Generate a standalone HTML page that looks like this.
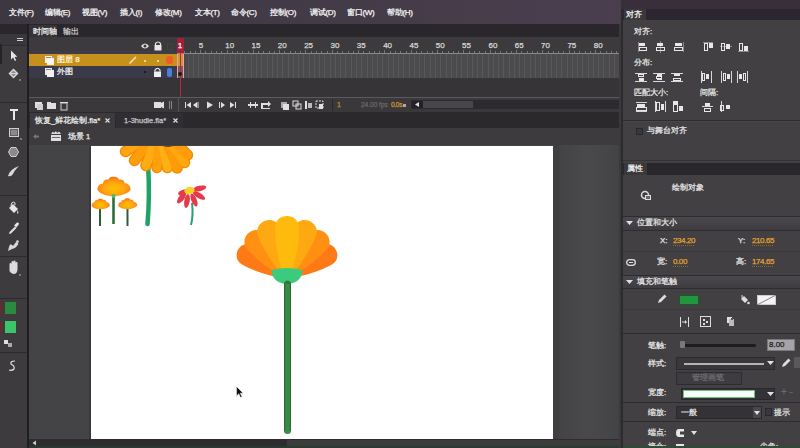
<!DOCTYPE html>
<html><head><meta charset="utf-8">
<style>
*{margin:0;padding:0;box-sizing:border-box}
html,body{width:800px;height:448px;overflow:hidden;background:#3f3d40;font-family:"Liberation Sans",sans-serif;color:#ddd}
.a{position:absolute}
.t{position:absolute;font-size:8px;line-height:10px;white-space:nowrap;color:#e6e6e6;-webkit-text-stroke:0.25px currentColor}
</style></head><body>
<!-- menu bar -->
<div class="a" style="left:0;top:0;width:800px;height:24px;background:linear-gradient(90deg,#3d3741 0%,#453c49 50%,#4e4053 100%)"></div>
<div class="t" style="left:9px;top:7.5px;font-size:8px;letter-spacing:-0.3px;color:#f6f6f6">文件(F)</div>
<div class="t" style="left:45px;top:7.5px;font-size:8px;letter-spacing:-0.3px;color:#f6f6f6">编辑(E)</div>
<div class="t" style="left:82px;top:7.5px;font-size:8px;letter-spacing:-0.3px;color:#f6f6f6">视图(V)</div>
<div class="t" style="left:120px;top:7.5px;font-size:8px;letter-spacing:-0.3px;color:#f6f6f6">插入(I)</div>
<div class="t" style="left:155px;top:7.5px;font-size:8px;letter-spacing:-0.3px;color:#f6f6f6">修改(M)</div>
<div class="t" style="left:195px;top:7.5px;font-size:8px;letter-spacing:-0.3px;color:#f6f6f6">文本(T)</div>
<div class="t" style="left:231px;top:7.5px;font-size:8px;letter-spacing:-0.3px;color:#f6f6f6">命令(C)</div>
<div class="t" style="left:270px;top:7.5px;font-size:8px;letter-spacing:-0.3px;color:#f6f6f6">控制(O)</div>
<div class="t" style="left:310px;top:7.5px;font-size:8px;letter-spacing:-0.3px;color:#f6f6f6">调试(D)</div>
<div class="t" style="left:347px;top:7.5px;font-size:8px;letter-spacing:-0.3px;color:#f6f6f6">窗口(W)</div>
<div class="t" style="left:387px;top:7.5px;font-size:8px;letter-spacing:-0.3px;color:#f6f6f6">帮助(H)</div>

<!-- left toolbar -->
<div class="a" style="left:0;top:24px;width:27px;height:424px;background:#3d3b3e"></div>
<div class="a" style="left:0;top:24px;width:27px;height:10px;background:#29272b"></div>
<div class="a" style="left:0;top:34px;width:27px;height:11px;background:#39373b"></div><div class="a" style="left:0;top:45px;width:27px;height:1px;background:#2e2c30"></div>
<div class="a" style="left:17px;top:38px;width:6px;height:1px;background:#cfcfcf"></div>
<div class="a" style="left:17px;top:40px;width:6px;height:1px;background:#cfcfcf"></div>
<div class="a" style="left:0;top:44px;width:2px;height:20px;background:#252327"></div>
<div class="a" style="left:27px;top:24px;width:2px;height:424px;background:#201e22"></div>
<div class="a" style="left:0;top:102px;width:27px;height:1px;background:#2c2a2e"></div>
<div class="a" style="left:0;top:195px;width:27px;height:1px;background:#2c2a2e"></div>
<div class="a" style="left:0;top:256px;width:27px;height:1px;background:#2c2a2e"></div>
<div class="a" style="left:0;top:298px;width:27px;height:1px;background:#2c2a2e"></div>
<div class="a" style="left:0;top:352px;width:27px;height:1px;background:#2c2a2e"></div>
<svg class="a" style="left:0;top:25px" width="27" height="423" viewBox="0 25 27 423">
<g fill="#e4e4e4">
<path d="M11 50.5 V59.5 L13.2 57.5 L14.8 61 L16.2 60.3 L14.6 57 L17.3 56.8Z"/>
<path d="M13.5 68.5 L18.5 73.5 L13.5 78.5 L8.5 73.5Z" fill="#d8d8d8"/>
<path d="M13.5 70.5 L16.5 73.5 L13.5 76.5 L10.5 73.5Z" fill="#8a888c"/><rect x="9" y="73" width="9" height="1" fill="#d8d8d8"/>
<circle cx="20" cy="80" r="0.7"/>
<path d="M10 109 H18 V111 H15 V120 H13 V111 H10Z" fill="#e8e8e8"/>
<rect x="9.5" y="128.5" width="9" height="8" fill="none" stroke="#cfcfcf" stroke-width="1"/>
<rect x="10.5" y="129.5" width="7" height="6" fill="#8a898c"/>
<circle cx="21" cy="139" r="0.7"/>
<path d="M11 147.5 L16 147.5 L18.5 152 L16 156.5 L11 156.5 L8.5 152Z" fill="#8a898c" stroke="#d0d0d0" stroke-width="1"/>
<path d="M8 176 Q10 169 19 166 Q14 171 13 174 Q11 177 8 176Z" fill="#d8d8d8"/>
<path d="M9 208 L13 204 L18 209 L14 213 Z" fill="#e6e6e6"/><path d="M11 206 Q11 202 13.5 202 Q15.5 202 15 205" stroke="#e6e6e6" stroke-width="1" fill="none"/><path d="M17.5 210 Q19 212 18 214 Q16.5 213 17.5 210Z" fill="#e6e6e6"/>
<path d="M9 234 L9.5 232 L15 226.5 L16.5 228 L11 233.5Z" fill="#e0e0e0"/><path d="M14 225.5 L17 222.5 Q19 222 19 224 L16.5 227.5Z" fill="#e6e6e6"/>
<path d="M8 251 L9 247 Q10 243 12 245 Q13 247 14.5 244 Q16 241 18 242.5 Q19 244 17 246 Q15 249 12 249 Z" fill="#d8d8d8"/><circle cx="17.5" cy="241.5" r="1.3" fill="#d8d8d8"/>
<path d="M9.5 268 L9.5 264 Q9.5 263 10.5 263 Q11.5 263 11.5 264 L11.5 262 Q11.5 261 12.5 261 Q13.5 261 13.5 262 L13.5 261.5 Q13.5 260.5 14.5 260.5 Q15.5 260.5 15.5 261.5 L15.5 263 Q15.5 262 16.5 262 Q17.5 262 17.5 263 L17.5 269 Q17.5 274 13.5 274 Q11 274 9.5 271Z" fill="#dcdcdc"/>
<circle cx="20" cy="275" r="0.7"/>
</g>
<rect x="0" y="302" width="2" height="12" fill="#6a2a2a"/>
<rect x="5" y="302" width="11" height="12" fill="#2a8a3e"/>
<rect x="0" y="321" width="2" height="12" fill="#6a2a2a"/>
<rect x="5" y="321" width="11" height="12" fill="#3cc46a"/>
<g fill="#e0e0e0"><rect x="4" y="340" width="4" height="4"/><rect x="8" y="343" width="4" height="4" fill="#aaa"/></g>
<path d="M15 361 Q10 361 11 364 Q15 366 14 369 Q12 371 9 370" stroke="#e0e0e0" stroke-width="1.2" fill="none"/>
</svg>
<!-- timeline panel -->
<div class="a" style="left:29px;top:24px;width:593px;height:13px;background:#29272b"></div>
<div class="a" style="left:29px;top:25px;width:28px;height:12px;background:#353337"></div>
<div class="t" style="left:33px;top:27px;font-size:7.5px;color:#f4f4f4">时间轴</div>
<div class="t" style="left:63px;top:27px;font-size:7.5px;color:#c8c8c8">输出</div>
<div class="a" style="left:29px;top:37px;width:593px;height:16px;background:#3c3a3d"></div>
<div class="a" style="left:29px;top:51px;width:148px;height:3px;background:#3e3b4a"></div>
<div class="a" style="left:29px;top:54px;width:148px;height:12px;background:#c6901c"></div>
<div class="a" style="left:29px;top:66px;width:148px;height:12px;background:#3b3a48"></div>
<div class="a" style="left:29px;top:78px;width:593px;height:20px;background:#363437"></div>
<div class="a" style="left:177px;top:54px;width:445px;height:24px;background:#4b4a4d"></div>
<div class="a" style="left:177px;top:53px;width:445px;height:1px;background:#8a898c"></div>
<div class="a" style="left:179.13px;top:51px;width:1px;height:2px;background:#77757a"></div>
<div class="a" style="left:182.26px;top:54px;width:1px;height:24px;background:#58575a"></div>
<div class="a" style="left:184.40px;top:51px;width:1px;height:2px;background:#77757a"></div>
<div class="a" style="left:187.53px;top:54px;width:1px;height:24px;background:#58575a"></div>
<div class="a" style="left:189.66px;top:51px;width:1px;height:2px;background:#77757a"></div>
<div class="a" style="left:192.79px;top:54px;width:1px;height:24px;background:#58575a"></div>
<div class="a" style="left:194.93px;top:51px;width:1px;height:2px;background:#77757a"></div>
<div class="a" style="left:198.06px;top:54px;width:1px;height:24px;background:#58575a"></div>
<div class="a" style="left:200.19px;top:50px;width:1px;height:3px;background:#77757a"></div>
<div class="t" style="left:198.86px;top:41px;font-size:8px;color:#dadada">5</div>
<div class="a" style="left:203.32px;top:54px;width:1px;height:24px;background:#58575a"></div>
<div class="a" style="left:205.46px;top:51px;width:1px;height:2px;background:#77757a"></div>
<div class="a" style="left:208.59px;top:54px;width:1px;height:24px;background:#58575a"></div>
<div class="a" style="left:210.72px;top:51px;width:1px;height:2px;background:#77757a"></div>
<div class="a" style="left:213.85px;top:54px;width:1px;height:24px;background:#58575a"></div>
<div class="a" style="left:215.99px;top:51px;width:1px;height:2px;background:#77757a"></div>
<div class="a" style="left:219.12px;top:54px;width:1px;height:24px;background:#58575a"></div>
<div class="a" style="left:221.25px;top:51px;width:1px;height:2px;background:#77757a"></div>
<div class="a" style="left:224.38px;top:54px;width:1px;height:24px;background:#58575a"></div>
<div class="a" style="left:226.52px;top:50px;width:1px;height:3px;background:#77757a"></div>
<div class="t" style="left:225.19px;top:41px;font-size:8px;color:#dadada">10</div>
<div class="a" style="left:229.65px;top:54px;width:1px;height:24px;background:#58575a"></div>
<div class="a" style="left:231.78px;top:51px;width:1px;height:2px;background:#77757a"></div>
<div class="a" style="left:234.91px;top:54px;width:1px;height:24px;background:#58575a"></div>
<div class="a" style="left:237.05px;top:51px;width:1px;height:2px;background:#77757a"></div>
<div class="a" style="left:240.18px;top:54px;width:1px;height:24px;background:#58575a"></div>
<div class="a" style="left:242.31px;top:51px;width:1px;height:2px;background:#77757a"></div>
<div class="a" style="left:245.44px;top:54px;width:1px;height:24px;background:#58575a"></div>
<div class="a" style="left:247.58px;top:51px;width:1px;height:2px;background:#77757a"></div>
<div class="a" style="left:250.71px;top:54px;width:1px;height:24px;background:#58575a"></div>
<div class="a" style="left:252.84px;top:50px;width:1px;height:3px;background:#77757a"></div>
<div class="t" style="left:251.51px;top:41px;font-size:8px;color:#dadada">15</div>
<div class="a" style="left:255.97px;top:54px;width:1px;height:24px;background:#58575a"></div>
<div class="a" style="left:258.11px;top:51px;width:1px;height:2px;background:#77757a"></div>
<div class="a" style="left:261.24px;top:54px;width:1px;height:24px;background:#58575a"></div>
<div class="a" style="left:263.37px;top:51px;width:1px;height:2px;background:#77757a"></div>
<div class="a" style="left:266.50px;top:54px;width:1px;height:24px;background:#58575a"></div>
<div class="a" style="left:268.64px;top:51px;width:1px;height:2px;background:#77757a"></div>
<div class="a" style="left:271.77px;top:54px;width:1px;height:24px;background:#58575a"></div>
<div class="a" style="left:273.90px;top:51px;width:1px;height:2px;background:#77757a"></div>
<div class="a" style="left:277.03px;top:54px;width:1px;height:24px;background:#58575a"></div>
<div class="a" style="left:279.17px;top:50px;width:1px;height:3px;background:#77757a"></div>
<div class="t" style="left:277.83px;top:41px;font-size:8px;color:#dadada">20</div>
<div class="a" style="left:282.30px;top:54px;width:1px;height:24px;background:#58575a"></div>
<div class="a" style="left:284.43px;top:51px;width:1px;height:2px;background:#77757a"></div>
<div class="a" style="left:287.56px;top:54px;width:1px;height:24px;background:#58575a"></div>
<div class="a" style="left:289.70px;top:51px;width:1px;height:2px;background:#77757a"></div>
<div class="a" style="left:292.83px;top:54px;width:1px;height:24px;background:#58575a"></div>
<div class="a" style="left:294.96px;top:51px;width:1px;height:2px;background:#77757a"></div>
<div class="a" style="left:298.09px;top:54px;width:1px;height:24px;background:#58575a"></div>
<div class="a" style="left:300.23px;top:51px;width:1px;height:2px;background:#77757a"></div>
<div class="a" style="left:303.36px;top:54px;width:1px;height:24px;background:#58575a"></div>
<div class="a" style="left:305.49px;top:50px;width:1px;height:3px;background:#77757a"></div>
<div class="t" style="left:304.16px;top:41px;font-size:8px;color:#dadada">25</div>
<div class="a" style="left:308.62px;top:54px;width:1px;height:24px;background:#58575a"></div>
<div class="a" style="left:310.76px;top:51px;width:1px;height:2px;background:#77757a"></div>
<div class="a" style="left:313.89px;top:54px;width:1px;height:24px;background:#58575a"></div>
<div class="a" style="left:316.02px;top:51px;width:1px;height:2px;background:#77757a"></div>
<div class="a" style="left:319.15px;top:54px;width:1px;height:24px;background:#58575a"></div>
<div class="a" style="left:321.29px;top:51px;width:1px;height:2px;background:#77757a"></div>
<div class="a" style="left:324.42px;top:54px;width:1px;height:24px;background:#58575a"></div>
<div class="a" style="left:326.55px;top:51px;width:1px;height:2px;background:#77757a"></div>
<div class="a" style="left:329.68px;top:54px;width:1px;height:24px;background:#58575a"></div>
<div class="a" style="left:331.82px;top:50px;width:1px;height:3px;background:#77757a"></div>
<div class="t" style="left:330.49px;top:41px;font-size:8px;color:#dadada">30</div>
<div class="a" style="left:334.95px;top:54px;width:1px;height:24px;background:#58575a"></div>
<div class="a" style="left:337.08px;top:51px;width:1px;height:2px;background:#77757a"></div>
<div class="a" style="left:340.21px;top:54px;width:1px;height:24px;background:#58575a"></div>
<div class="a" style="left:342.35px;top:51px;width:1px;height:2px;background:#77757a"></div>
<div class="a" style="left:345.48px;top:54px;width:1px;height:24px;background:#58575a"></div>
<div class="a" style="left:347.61px;top:51px;width:1px;height:2px;background:#77757a"></div>
<div class="a" style="left:350.75px;top:54px;width:1px;height:24px;background:#58575a"></div>
<div class="a" style="left:352.88px;top:51px;width:1px;height:2px;background:#77757a"></div>
<div class="a" style="left:356.01px;top:54px;width:1px;height:24px;background:#58575a"></div>
<div class="a" style="left:358.14px;top:50px;width:1px;height:3px;background:#77757a"></div>
<div class="t" style="left:356.81px;top:41px;font-size:8px;color:#dadada">35</div>
<div class="a" style="left:361.27px;top:54px;width:1px;height:24px;background:#58575a"></div>
<div class="a" style="left:363.41px;top:51px;width:1px;height:2px;background:#77757a"></div>
<div class="a" style="left:366.54px;top:54px;width:1px;height:24px;background:#58575a"></div>
<div class="a" style="left:368.67px;top:51px;width:1px;height:2px;background:#77757a"></div>
<div class="a" style="left:371.80px;top:54px;width:1px;height:24px;background:#58575a"></div>
<div class="a" style="left:373.94px;top:51px;width:1px;height:2px;background:#77757a"></div>
<div class="a" style="left:377.07px;top:54px;width:1px;height:24px;background:#58575a"></div>
<div class="a" style="left:379.20px;top:51px;width:1px;height:2px;background:#77757a"></div>
<div class="a" style="left:382.33px;top:54px;width:1px;height:24px;background:#58575a"></div>
<div class="a" style="left:384.47px;top:50px;width:1px;height:3px;background:#77757a"></div>
<div class="t" style="left:383.13px;top:41px;font-size:8px;color:#dadada">40</div>
<div class="a" style="left:387.60px;top:54px;width:1px;height:24px;background:#58575a"></div>
<div class="a" style="left:389.73px;top:51px;width:1px;height:2px;background:#77757a"></div>
<div class="a" style="left:392.87px;top:54px;width:1px;height:24px;background:#58575a"></div>
<div class="a" style="left:395.00px;top:51px;width:1px;height:2px;background:#77757a"></div>
<div class="a" style="left:398.13px;top:54px;width:1px;height:24px;background:#58575a"></div>
<div class="a" style="left:400.26px;top:51px;width:1px;height:2px;background:#77757a"></div>
<div class="a" style="left:403.39px;top:54px;width:1px;height:24px;background:#58575a"></div>
<div class="a" style="left:405.53px;top:51px;width:1px;height:2px;background:#77757a"></div>
<div class="a" style="left:408.66px;top:54px;width:1px;height:24px;background:#58575a"></div>
<div class="a" style="left:410.79px;top:50px;width:1px;height:3px;background:#77757a"></div>
<div class="t" style="left:409.46px;top:41px;font-size:8px;color:#dadada">45</div>
<div class="a" style="left:413.92px;top:54px;width:1px;height:24px;background:#58575a"></div>
<div class="a" style="left:416.06px;top:51px;width:1px;height:2px;background:#77757a"></div>
<div class="a" style="left:419.19px;top:54px;width:1px;height:24px;background:#58575a"></div>
<div class="a" style="left:421.32px;top:51px;width:1px;height:2px;background:#77757a"></div>
<div class="a" style="left:424.45px;top:54px;width:1px;height:24px;background:#58575a"></div>
<div class="a" style="left:426.59px;top:51px;width:1px;height:2px;background:#77757a"></div>
<div class="a" style="left:429.72px;top:54px;width:1px;height:24px;background:#58575a"></div>
<div class="a" style="left:431.85px;top:51px;width:1px;height:2px;background:#77757a"></div>
<div class="a" style="left:434.98px;top:54px;width:1px;height:24px;background:#58575a"></div>
<div class="a" style="left:437.12px;top:50px;width:1px;height:3px;background:#77757a"></div>
<div class="t" style="left:435.78px;top:41px;font-size:8px;color:#dadada">50</div>
<div class="a" style="left:440.25px;top:54px;width:1px;height:24px;background:#58575a"></div>
<div class="a" style="left:442.38px;top:51px;width:1px;height:2px;background:#77757a"></div>
<div class="a" style="left:445.51px;top:54px;width:1px;height:24px;background:#58575a"></div>
<div class="a" style="left:447.65px;top:51px;width:1px;height:2px;background:#77757a"></div>
<div class="a" style="left:450.78px;top:54px;width:1px;height:24px;background:#58575a"></div>
<div class="a" style="left:452.91px;top:51px;width:1px;height:2px;background:#77757a"></div>
<div class="a" style="left:456.04px;top:54px;width:1px;height:24px;background:#58575a"></div>
<div class="a" style="left:458.18px;top:51px;width:1px;height:2px;background:#77757a"></div>
<div class="a" style="left:461.31px;top:54px;width:1px;height:24px;background:#58575a"></div>
<div class="a" style="left:463.44px;top:50px;width:1px;height:3px;background:#77757a"></div>
<div class="t" style="left:462.11px;top:41px;font-size:8px;color:#dadada">55</div>
<div class="a" style="left:466.57px;top:54px;width:1px;height:24px;background:#58575a"></div>
<div class="a" style="left:468.71px;top:51px;width:1px;height:2px;background:#77757a"></div>
<div class="a" style="left:471.84px;top:54px;width:1px;height:24px;background:#58575a"></div>
<div class="a" style="left:473.97px;top:51px;width:1px;height:2px;background:#77757a"></div>
<div class="a" style="left:477.10px;top:54px;width:1px;height:24px;background:#58575a"></div>
<div class="a" style="left:479.24px;top:51px;width:1px;height:2px;background:#77757a"></div>
<div class="a" style="left:482.37px;top:54px;width:1px;height:24px;background:#58575a"></div>
<div class="a" style="left:484.50px;top:51px;width:1px;height:2px;background:#77757a"></div>
<div class="a" style="left:487.63px;top:54px;width:1px;height:24px;background:#58575a"></div>
<div class="a" style="left:489.77px;top:50px;width:1px;height:3px;background:#77757a"></div>
<div class="t" style="left:488.44px;top:41px;font-size:8px;color:#dadada">60</div>
<div class="a" style="left:492.90px;top:54px;width:1px;height:24px;background:#58575a"></div>
<div class="a" style="left:495.03px;top:51px;width:1px;height:2px;background:#77757a"></div>
<div class="a" style="left:498.16px;top:54px;width:1px;height:24px;background:#58575a"></div>
<div class="a" style="left:500.30px;top:51px;width:1px;height:2px;background:#77757a"></div>
<div class="a" style="left:503.43px;top:54px;width:1px;height:24px;background:#58575a"></div>
<div class="a" style="left:505.56px;top:51px;width:1px;height:2px;background:#77757a"></div>
<div class="a" style="left:508.69px;top:54px;width:1px;height:24px;background:#58575a"></div>
<div class="a" style="left:510.83px;top:51px;width:1px;height:2px;background:#77757a"></div>
<div class="a" style="left:513.96px;top:54px;width:1px;height:24px;background:#58575a"></div>
<div class="a" style="left:516.09px;top:50px;width:1px;height:3px;background:#77757a"></div>
<div class="t" style="left:514.76px;top:41px;font-size:8px;color:#dadada">65</div>
<div class="a" style="left:519.23px;top:54px;width:1px;height:24px;background:#58575a"></div>
<div class="a" style="left:521.36px;top:51px;width:1px;height:2px;background:#77757a"></div>
<div class="a" style="left:524.49px;top:54px;width:1px;height:24px;background:#58575a"></div>
<div class="a" style="left:526.62px;top:51px;width:1px;height:2px;background:#77757a"></div>
<div class="a" style="left:529.75px;top:54px;width:1px;height:24px;background:#58575a"></div>
<div class="a" style="left:531.89px;top:51px;width:1px;height:2px;background:#77757a"></div>
<div class="a" style="left:535.02px;top:54px;width:1px;height:24px;background:#58575a"></div>
<div class="a" style="left:537.15px;top:51px;width:1px;height:2px;background:#77757a"></div>
<div class="a" style="left:540.28px;top:54px;width:1px;height:24px;background:#58575a"></div>
<div class="a" style="left:542.42px;top:50px;width:1px;height:3px;background:#77757a"></div>
<div class="t" style="left:541.08px;top:41px;font-size:8px;color:#dadada">70</div>
<div class="a" style="left:545.55px;top:54px;width:1px;height:24px;background:#58575a"></div>
<div class="a" style="left:547.68px;top:51px;width:1px;height:2px;background:#77757a"></div>
<div class="a" style="left:550.81px;top:54px;width:1px;height:24px;background:#58575a"></div>
<div class="a" style="left:552.95px;top:51px;width:1px;height:2px;background:#77757a"></div>
<div class="a" style="left:556.08px;top:54px;width:1px;height:24px;background:#58575a"></div>
<div class="a" style="left:558.21px;top:51px;width:1px;height:2px;background:#77757a"></div>
<div class="a" style="left:561.34px;top:54px;width:1px;height:24px;background:#58575a"></div>
<div class="a" style="left:563.48px;top:51px;width:1px;height:2px;background:#77757a"></div>
<div class="a" style="left:566.61px;top:54px;width:1px;height:24px;background:#58575a"></div>
<div class="a" style="left:568.74px;top:50px;width:1px;height:3px;background:#77757a"></div>
<div class="t" style="left:567.41px;top:41px;font-size:8px;color:#dadada">75</div>
<div class="a" style="left:571.87px;top:54px;width:1px;height:24px;background:#58575a"></div>
<div class="a" style="left:574.01px;top:51px;width:1px;height:2px;background:#77757a"></div>
<div class="a" style="left:577.14px;top:54px;width:1px;height:24px;background:#58575a"></div>
<div class="a" style="left:579.27px;top:51px;width:1px;height:2px;background:#77757a"></div>
<div class="a" style="left:582.40px;top:54px;width:1px;height:24px;background:#58575a"></div>
<div class="a" style="left:584.54px;top:51px;width:1px;height:2px;background:#77757a"></div>
<div class="a" style="left:587.67px;top:54px;width:1px;height:24px;background:#58575a"></div>
<div class="a" style="left:589.80px;top:51px;width:1px;height:2px;background:#77757a"></div>
<div class="a" style="left:592.93px;top:54px;width:1px;height:24px;background:#58575a"></div>
<div class="a" style="left:595.07px;top:50px;width:1px;height:3px;background:#77757a"></div>
<div class="t" style="left:593.73px;top:41px;font-size:8px;color:#dadada">80</div>
<div class="a" style="left:598.20px;top:54px;width:1px;height:24px;background:#58575a"></div>
<div class="a" style="left:600.33px;top:51px;width:1px;height:2px;background:#77757a"></div>
<div class="a" style="left:603.47px;top:54px;width:1px;height:24px;background:#58575a"></div>
<div class="a" style="left:605.60px;top:51px;width:1px;height:2px;background:#77757a"></div>
<div class="a" style="left:608.73px;top:54px;width:1px;height:24px;background:#58575a"></div>
<div class="a" style="left:610.86px;top:51px;width:1px;height:2px;background:#77757a"></div>
<div class="a" style="left:614.00px;top:54px;width:1px;height:24px;background:#58575a"></div>
<div class="a" style="left:616.13px;top:51px;width:1px;height:2px;background:#77757a"></div>
<div class="a" style="left:619.26px;top:54px;width:1px;height:24px;background:#58575a"></div>
<div class="a" style="left:176.5px;top:38px;width:7px;height:15px;background:#a51f3a"></div>
<div class="t" style="left:176.5px;top:41px;width:7px;text-align:center;font-size:8px;color:#fff">1</div>
<div class="a" style="left:177px;top:54px;width:7px;height:12px;background:#d29634"></div>
<div class="a" style="left:177px;top:66px;width:7px;height:12px;background:#7a5a58"></div>
<div class="a" style="left:177px;top:54px;width:1px;height:24px;background:#f0a0a0"></div>
<div class="a" style="left:183px;top:54px;width:1px;height:24px;background:#f0a0a0"></div>
<div class="a" style="left:179.5px;top:53px;width:1px;height:45px;background:#b02a48"></div>
<div class="a" style="left:178px;top:71.5px;width:4px;height:4px;border-radius:50%;background:#1a1a1a"></div>
<!-- header icons -->
<svg class="a" style="left:140px;top:41px" width="35" height="10" viewBox="0 0 35 10">
<path d="M1 5 Q5 0 9 5 Q5 10 1 5Z" fill="#e8e8e8"/><circle cx="5" cy="5" r="1.6" fill="#3c3a3d"/>
<path d="M15.5 4 V2.5 Q18 -0.5 20.5 2.5 V4" stroke="#e8e8e8" stroke-width="1.2" fill="none"/><rect x="14.5" y="4" width="7" height="5.5" fill="#e8e8e8"/>
<rect x="27.5" y="3" width="5" height="6" fill="none" stroke="#3a4a3a" stroke-width="1"/>
</svg>
<!-- row1 -->
<svg class="a" style="left:45px;top:56px" width="9" height="9" viewBox="0 0 9 9"><rect x="0" y="0" width="7" height="7" fill="#f4f0e8"/><rect x="2" y="2" width="7" height="7" fill="#f8f6f0"/><rect x="1" y="1" width="5" height="1" fill="#888"/></svg>
<div class="t" style="left:57px;top:55px;font-size:8px;color:#fff6d8">图层 8</div>
<svg class="a" style="left:128px;top:56px" width="9" height="8" viewBox="0 0 9 8"><path d="M1 7 L7.5 0.5 L8.5 1.5 L2 8Z" fill="#f8e8c0"/></svg>
<div class="a" style="left:144px;top:59.5px;width:2px;height:2px;border-radius:50%;background:#ffeeaa"></div>
<div class="a" style="left:157px;top:59.5px;width:2px;height:2px;border-radius:50%;background:#ffeeaa"></div>
<div class="a" style="left:166px;top:56px;width:7px;height:8px;border-radius:3px;background:#f05a26"></div>
<!-- row2 -->
<svg class="a" style="left:45px;top:68px" width="9" height="9" viewBox="0 0 9 9"><rect x="0" y="0" width="7" height="7" fill="#e8e8e8"/><rect x="2" y="2" width="7" height="7" fill="#f0f0f0"/><rect x="1" y="1" width="5" height="1" fill="#888"/></svg>
<div class="t" style="left:57px;top:67px;font-size:8px;color:#f0f0f0">外图</div>
<div class="a" style="left:144px;top:71px;width:2px;height:2px;border-radius:50%;background:#111"></div>
<svg class="a" style="left:153px;top:67px" width="9" height="10" viewBox="0 0 9 10"><path d="M2 4.5 V3 Q4.5 -0.5 7 3 V4.5" stroke="#f0f0f0" stroke-width="1.2" fill="none"/><rect x="1" y="4.5" width="7" height="5.5" fill="#f0f0f0"/></svg>
<div class="a" style="left:167px;top:68px;width:5px;height:9px;border-radius:2px;background:#4a7ee0"></div>
<!-- bottom toolbar -->
<div class="a" style="left:29px;top:97px;width:593px;height:1px;background:#5c5a5e"></div>
<div class="a" style="left:29px;top:98px;width:593px;height:14px;background:#3a383b"></div>
<svg class="a" style="left:34px;top:100px" width="300" height="11" viewBox="34 100 300 11">
<g fill="#e0e0e0">
<rect x="35" y="102" width="7" height="6"/><rect x="37" y="104" width="6" height="6" fill="#cfcfcf"/>
<rect x="47" y="103" width="9" height="6"/><rect x="47" y="102" width="4" height="2"/>
<rect x="61" y="103" width="6" height="7" fill="none" stroke="#d0d0d0" stroke-width="1"/><rect x="60" y="102" width="8" height="1"/>
<rect x="154" y="102" width="7" height="6"/><path d="M161 103 L164 101.5 V108.5 L161 107Z"/>
<rect x="169" y="101" width="1" height="8" fill="#888"/><rect x="171" y="101" width="1" height="8" fill="#888"/>
<rect x="185" y="102" width="1" height="6"/><path d="M191 102 V108 L186.5 105Z"/>
<path d="M197 102 V108 L193 105Z"/><rect x="197.5" y="102" width="1" height="6"/>
<path d="M207 101.5 V108.5 L213 105Z"/>
<rect x="219" y="102" width="1" height="6"/><path d="M221 102 V108 L225 105Z"/>
<path d="M230 102 V108 L234.5 105Z"/><rect x="235" y="102" width="1" height="6"/>
<rect x="248" y="104" width="10" height="2"/><rect x="250" y="102" width="1" height="6"/><rect x="255" y="102" width="1" height="6"/>
<path d="M261 103 H268 V101 L271 104 L268 107 V105 H263 V108 H270 V109 H261Z"/>
<rect x="281" y="102" width="6" height="6" fill="#aaa"/><rect x="283" y="104" width="6" height="6"/>
<rect x="293" y="101" width="5" height="5" fill="none" stroke="#ddd" stroke-width="1"/><rect x="296" y="104" width="5" height="5" fill="none" stroke="#ddd" stroke-width="1"/>
<rect x="305" y="101" width="2" height="8"/><rect x="308" y="103" width="4" height="5" fill="#bbb"/>
<rect x="316" y="101" width="7" height="7" fill="none" stroke="#ddd" stroke-width="1" stroke-dasharray="2 1"/><rect x="319" y="104" width="4" height="5"/>
</g>
</svg>
<div class="a" style="left:178px;top:98px;width:1px;height:14px;background:#55535a"></div>
<div class="a" style="left:332px;top:99px;width:1px;height:12px;background:#2a282c"></div>
<div class="t" style="left:337px;top:100px;font-size:7px;color:#b88a30">1</div>
<div class="t" style="left:361px;top:100px;font-size:6.5px;color:#6a686c">24.00 fps</div>
<div class="t" style="left:391px;top:100px;font-size:6.5px;letter-spacing:-0.3px;color:#d09a30">0.0s</div>
<div class="a" style="left:403px;top:104px;width:3px;height:3px;background:#aaa"></div>
<div class="a" style="left:411px;top:100px;width:209px;height:9px;background:#2c2a2e"></div>
<div class="a" style="left:412px;top:101px;width:11px;height:7px;background:#232125"></div>
<div class="a" style="left:423px;top:101px;width:50px;height:7px;background:#48464a"></div>
<svg class="a" style="left:414px;top:102px" width="6" height="5" viewBox="0 0 6 5"><path d="M5 0 V5 L1 2.5Z" fill="#e0e0e0"/></svg>
<!-- doc tabs -->
<div class="a" style="left:29px;top:112px;width:591px;height:16px;background:#2b292c"></div>
<div class="a" style="left:30px;top:113px;width:85px;height:15px;background:#3c3a3d"></div><div class="a" style="left:116px;top:113px;width:67px;height:15px;background:#302e32"></div>
<div class="t" style="left:35px;top:116px;font-size:7.5px;color:#ececec">恢复_鲜花绘制.fla*</div>
<svg class="a" style="left:105px;top:118px" width="5" height="5"><path d="M0.5 0.5 L4.5 4.5 M4.5 0.5 L0.5 4.5" stroke="#e0e0e0" stroke-width="1.1"/></svg>
<div class="t" style="left:124px;top:116px;font-size:7.5px;color:#c8c8c8">1-3hudie.fla*</div>
<svg class="a" style="left:173px;top:118px" width="5" height="5"><path d="M0.5 0.5 L4.5 4.5 M4.5 0.5 L0.5 4.5" stroke="#e0e0e0" stroke-width="1.1"/></svg>
<!-- scene bar -->
<div class="a" style="left:29px;top:128px;width:591px;height:17px;background:#3d3b3e"></div>
<svg class="a" style="left:32px;top:133px" width="8" height="7"><path d="M1 3.5 L4 1 V2.5 H7 V4.5 H4 V6Z" fill="#77757a"/></svg>
<svg class="a" style="left:50px;top:131px" width="12" height="10" viewBox="0 0 12 10"><rect x="1" y="4" width="10" height="6" fill="#e0e0e0"/><path d="M1 3 L3 0.5 L4 2 L6 0 L7 2 L9 0.5 L11 3Z" fill="#e0e0e0"/><rect x="2" y="6" width="8" height="1" fill="#666"/></svg>
<div class="t" style="left:68px;top:132px;font-size:7.5px;color:#e8e8e8">场景 1</div>
<!-- stage area -->
<div class="a" style="left:29px;top:145px;width:591px;height:294px;background:#444346"></div>
<div class="a" style="left:89px;top:146px;width:2px;height:293px;background:#38373a"></div><div class="a" style="left:553px;top:145px;width:66px;height:294px;background:linear-gradient(90deg,#3f3e41 0px,#3f3e41 6px,#444346 7px,#49484b 35px,#464548 55px,#434245 66px)"></div><div class="a" style="left:91px;top:146px;width:462px;height:293px;background:#ffffff"></div>
<svg class="a" style="left:91px;top:146px" width="462" height="293" viewBox="91 146 462 293">
<!-- drooping flower -->
<g>
<path d="M148 164 Q150 195 147.5 224" stroke="#1fa268" stroke-width="4.5" fill="none" stroke-linecap="round"/>
<line x1="160" y1="128" x2="125.5" y2="151.5" stroke="#f28a00" stroke-width="11.5" stroke-linecap="round"/><line x1="160" y1="128" x2="134.5" y2="160.5" stroke="#f28a00" stroke-width="11.5" stroke-linecap="round"/><line x1="160" y1="128" x2="146" y2="165.5" stroke="#f28a00" stroke-width="11.5" stroke-linecap="round"/><line x1="160" y1="128" x2="157" y2="167.5" stroke="#f28a00" stroke-width="11.5" stroke-linecap="round"/><line x1="160" y1="128" x2="167.5" y2="167.5" stroke="#f28a00" stroke-width="11.5" stroke-linecap="round"/><line x1="160" y1="128" x2="177" y2="168" stroke="#f28a00" stroke-width="11.5" stroke-linecap="round"/><line x1="160" y1="128" x2="184.5" y2="162.5" stroke="#f28a00" stroke-width="11.5" stroke-linecap="round"/><line x1="160" y1="128" x2="187.5" y2="155" stroke="#f28a00" stroke-width="11.5" stroke-linecap="round"/><line x1="160" y1="128" x2="125.5" y2="151.5" stroke="#ffa412" stroke-width="9" stroke-linecap="round"/><line x1="160" y1="128" x2="134.5" y2="160.5" stroke="#ff9c0a" stroke-width="9" stroke-linecap="round"/><line x1="160" y1="128" x2="146" y2="165.5" stroke="#ffab14" stroke-width="9" stroke-linecap="round"/><line x1="160" y1="128" x2="157" y2="167.5" stroke="#ffa00c" stroke-width="9" stroke-linecap="round"/><line x1="160" y1="128" x2="167.5" y2="167.5" stroke="#ffb014" stroke-width="9" stroke-linecap="round"/><line x1="160" y1="128" x2="177" y2="168" stroke="#ff9a08" stroke-width="9" stroke-linecap="round"/><line x1="160" y1="128" x2="184.5" y2="162.5" stroke="#ffa810" stroke-width="9" stroke-linecap="round"/><line x1="160" y1="128" x2="187.5" y2="155" stroke="#ff9c0c" stroke-width="9" stroke-linecap="round"/>
<path d="M163 146 Q168 148 173 146Z" fill="#6a4a10"/>
</g>
<!-- small flowers -->
<g>
<line x1="113.5" y1="195" x2="113.5" y2="224" stroke="#2a6e3c" stroke-width="2.6"/>
<line x1="100" y1="207" x2="100" y2="226" stroke="#2a5e38" stroke-width="2"/>
<line x1="127.5" y1="207" x2="127.5" y2="226" stroke="#2a5e38" stroke-width="2"/>
<defs>
<radialGradient id="sg" cx="0.5" cy="0.6" r="0.6"><stop offset="0" stop-color="#ffc200"/><stop offset="0.55" stop-color="#ffa410"/><stop offset="1" stop-color="#ff6c12"/></radialGradient>
</defs>
<path d="M97.6 190 C97 186 100 183.5 103 183.5 C103 180 106 179 108.5 179.5 C109.5 177 112 176.5 113.5 177 C115.5 176.5 118 177.5 119 179.5 C121.5 179 124.5 180 124.5 183 C128 183.5 131 186 130.5 190 C127 194 120 196 113.5 196 C107 196 100 194 97.6 190Z" fill="url(#sg)"/>
<circle cx="113.5" cy="196" r="2" fill="#3fc06a"/>
<path d="M97.6 190 C97 186 100 183.5 103 183.5 C103 180 106 179 108.5 179.5 C109.5 177 112 176.5 113.5 177 C115.5 176.5 118 177.5 119 179.5 C121.5 179 124.5 180 124.5 183 C128 183.5 131 186 130.5 190 C127 194 120 196 113.5 196 C107 196 100 194 97.6 190Z" fill="url(#sg)" transform="translate(100.4 209.2) scale(0.55) translate(-113.5 -196)"/>
<path d="M97.6 190 C97 186 100 183.5 103 183.5 C103 180 106 179 108.5 179.5 C109.5 177 112 176.5 113.5 177 C115.5 176.5 118 177.5 119 179.5 C121.5 179 124.5 180 124.5 183 C128 183.5 131 186 130.5 190 C127 194 120 196 113.5 196 C107 196 100 194 97.6 190Z" fill="url(#sg)" transform="translate(127.4 209.2) scale(0.57) translate(-113.5 -196)"/>
</g>
<!-- red flower -->
<g>
<path d="M192 203 Q193.5 215 191 225" stroke="#2ea070" stroke-width="2" fill="none"/>
<g fill="#e63a4a">
<ellipse cx="199.5" cy="188.5" rx="7" ry="2.7" transform="rotate(-12 199.5 188.5)"/>
<ellipse cx="199" cy="195.5" rx="7" ry="2.7" transform="rotate(32 199 195.5)"/>
<ellipse cx="194" cy="200" rx="7" ry="2.7" transform="rotate(68 194 200)"/>
<ellipse cx="187" cy="201" rx="7" ry="2.7" transform="rotate(100 187 201)"/>
<ellipse cx="181.5" cy="198" rx="6.5" ry="2.7" transform="rotate(128 181.5 198)"/>
<ellipse cx="183" cy="192.5" rx="5" ry="2.6" transform="rotate(160 183 192.5)"/>
</g>
<ellipse cx="189.5" cy="190.5" rx="5.2" ry="3.6" fill="#f4d41e" transform="rotate(-10 189.5 190.5)"/>
</g>
<!-- main flower -->
<g>



<path d="M0 4 C-7 -6 -11.5 -32 -11 -45 C-10.5 -59 10.5 -59 11 -45 C11.5 -32 7 -6 0 4Z" fill="#ff7a16" transform="translate(287 276) rotate(62) scale(1.0)"/>
<path d="M0 4 C-7 -6 -11.5 -32 -11 -45 C-10.5 -59 10.5 -59 11 -45 C11.5 -32 7 -6 0 4Z" fill="#ff7a16" transform="translate(287 276) rotate(-62) scale(1.0)"/>
<path d="M0 4 C-7 -6 -11.5 -32 -11 -45 C-10.5 -59 10.5 -59 11 -45 C11.5 -32 7 -6 0 4Z" fill="#ff9012" transform="translate(287 276) rotate(42) scale(1.04)"/>
<path d="M0 4 C-7 -6 -11.5 -32 -11 -45 C-10.5 -59 10.5 -59 11 -45 C11.5 -32 7 -6 0 4Z" fill="#ff9012" transform="translate(287 276) rotate(-42) scale(1.04)"/>
<path d="M0 4 C-7 -6 -11.5 -32 -11 -45 C-10.5 -59 10.5 -59 11 -45 C11.5 -32 7 -6 0 4Z" fill="#ffa912" transform="translate(287 276) rotate(22) scale(1.07)"/>
<path d="M0 4 C-7 -6 -11.5 -32 -11 -45 C-10.5 -59 10.5 -59 11 -45 C11.5 -32 7 -6 0 4Z" fill="#ffa912" transform="translate(287 276) rotate(-22) scale(1.07)"/>
<path d="M0 4 C-7 -6 -11.5 -32 -11 -45 C-10.5 -59 10.5 -59 11 -45 C11.5 -32 7 -6 0 4Z" fill="#ffbb0b" transform="translate(287 276) rotate(0) scale(1.08)"/>
<path d="M271.5 270 C271.5 279 279 284 287 284 C295 284 302.5 279 302.5 270 Q287 266 271.5 270Z" fill="#3cca7c"/>
<rect x="284" y="280.5" width="7" height="153.5" rx="3.5" fill="#3a8a48"/><rect x="284" y="283" width="1.2" height="148" fill="#2c6c38"/><rect x="289.8" y="283" width="1.2" height="148" fill="#2c6c38"/><rect x="285.5" y="281.5" width="4" height="2" rx="1" fill="#2c6c38"/>
</g>
<!-- cursor -->
<path d="M236.5 386.5 L236.5 396 L238.8 393.8 L240.5 397.5 L242 396.8 L240.3 393.2 L243.2 393.2Z" fill="#111" stroke="#fff" stroke-width="0.5"/>
</svg>
<div class="a" style="left:29px;top:439px;width:591px;height:9px;background:#2d2c2f"></div>
<div class="a" style="left:29px;top:446px;width:591px;height:2px;background:#2a3a30"></div>
<div class="a" style="left:287px;top:440px;width:333px;height:6px;background:#3a3d3c"></div>
<svg class="a" style="left:32px;top:440px" width="5" height="6"><path d="M4 0.5 V5.5 L0.5 3Z" fill="#ccc"/></svg>

<!-- right panel -->
<div class="a" style="left:620px;top:0;width:180px;height:448px;background:#424043"></div>
<div class="a" style="left:619px;top:25px;width:2px;height:423px;background:#3b393c"></div><div class="a" style="left:621px;top:24px;width:2px;height:424px;background:#2c2a2d"></div>
<div class="a" style="left:621px;top:0;width:179px;height:9px;background:#3a2d3c"></div><div class="a" style="left:621px;top:9px;width:2px;height:15px;background:#2c2a2d"></div>
<div class="a" style="left:623px;top:9px;width:177px;height:11px;background:#2c2630"></div>
<div class="a" style="left:624px;top:9px;width:22px;height:11px;background:#3a383b"></div>
<div class="t" style="left:626px;top:10px;font-size:7.5px;color:#f4f4f4">对齐</div>
<div class="t" style="left:634px;top:27px;font-size:8px">对齐:</div>
<div class="t" style="left:634px;top:58px;font-size:8px">分布:</div>
<div class="t" style="left:634px;top:88px;font-size:8px">匹配大小:</div>
<div class="t" style="left:700px;top:88px;font-size:8px">间隔:</div>
<svg class="a" style="left:623px;top:20px" width="177" height="100" viewBox="623 20 177 100"><rect x="638" y="42" width="1" height="10" fill="#8a888c"/><rect x="639" y="43" width="6" height="3" fill="#e8e8e8"/><rect x="639.5" y="47.5" width="7" height="3" fill="none" stroke="#e8e8e8" stroke-width="1"/><rect x="660" y="41" width="1" height="12" fill="#8a888c"/><rect x="657" y="43" width="6" height="3" fill="#e8e8e8"/><rect x="656.5" y="47.5" width="8" height="3" fill="none" stroke="#e8e8e8" stroke-width="1"/><rect x="683" y="42" width="1" height="10" fill="#8a888c"/><rect x="675" y="43" width="7" height="3" fill="#e8e8e8"/><rect x="674.5" y="47.5" width="8" height="3" fill="none" stroke="#e8e8e8" stroke-width="1"/><rect x="703" y="42" width="10" height="1" fill="#8a888c"/><rect x="704.5" y="43.5" width="3" height="7" fill="none" stroke="#e8e8e8" stroke-width="1"/><rect x="709" y="43" width="4" height="5" fill="#e8e8e8"/><rect x="720" y="46" width="12" height="1" fill="#8a888c"/><rect x="721.5" y="43.5" width="3" height="7" fill="none" stroke="#e8e8e8" stroke-width="1"/><rect x="726" y="44" width="4" height="5" fill="#e8e8e8"/><rect x="738" y="51" width="11" height="1" fill="#8a888c"/><rect x="739.5" y="43.5" width="3" height="7" fill="none" stroke="#e8e8e8" stroke-width="1"/><rect x="744" y="46" width="4" height="5" fill="#e8e8e8"/><rect x="635" y="73" width="12" height="1" fill="#d8d8d8"/><rect x="635" y="81" width="12" height="1" fill="#d8d8d8"/><rect x="653" y="73" width="12" height="1" fill="#d8d8d8"/><rect x="653" y="81" width="12" height="1" fill="#d8d8d8"/><rect x="671" y="73" width="12" height="1" fill="#d8d8d8"/><rect x="671" y="81" width="12" height="1" fill="#d8d8d8"/><rect x="638.5" y="74.5" width="5" height="2" fill="none" stroke="#e8e8e8" stroke-width="1"/><rect x="639" y="78" width="5" height="3" fill="#e8e8e8"/><rect x="656.5" y="76.5" width="5" height="2" fill="none" stroke="#e8e8e8" stroke-width="1"/><rect x="657" y="79" width="5" height="1" fill="#e8e8e8"/><rect x="657" y="74" width="5" height="2" fill="#e8e8e8"/><rect x="674" y="74" width="6" height="2" fill="#e8e8e8"/><rect x="673.5" y="78.5" width="7" height="2" fill="none" stroke="#e8e8e8" stroke-width="1"/><rect x="701" y="71" width="1" height="12" fill="#d8d8d8"/><rect x="711" y="71" width="1" height="12" fill="#d8d8d8"/><rect x="721" y="71" width="1" height="12" fill="#d8d8d8"/><rect x="731" y="71" width="1" height="12" fill="#d8d8d8"/><rect x="737" y="71" width="1" height="12" fill="#d8d8d8"/><rect x="747" y="71" width="1" height="12" fill="#d8d8d8"/><rect x="702.5" y="73.5" width="2" height="7" fill="none" stroke="#e8e8e8" stroke-width="1"/><rect x="706" y="74" width="3" height="5" fill="#e8e8e8"/><rect x="723.5" y="73.5" width="2" height="7" fill="none" stroke="#e8e8e8" stroke-width="1"/><rect x="727" y="74" width="3" height="5" fill="#e8e8e8"/><rect x="739" y="74" width="3" height="5" fill="#e8e8e8"/><rect x="743.5" y="73.5" width="2" height="7" fill="none" stroke="#e8e8e8" stroke-width="1"/><rect x="636" y="102" width="11" height="1" fill="#d8d8d8"/><rect x="637" y="104" width="8" height="3" fill="#e8e8e8"/><rect x="636.5" y="107.5" width="10" height="3" fill="none" stroke="#e8e8e8" stroke-width="1"/><rect x="636" y="111" width="11" height="1" fill="#d8d8d8"/><rect x="655" y="101" width="1" height="11" fill="#d8d8d8"/><rect x="656.5" y="102.5" width="3" height="8" fill="none" stroke="#e8e8e8" stroke-width="1"/><rect x="661" y="104" width="3" height="6" fill="#e8e8e8"/><rect x="665" y="101" width="1" height="11" fill="#d8d8d8"/><rect x="673.5" y="101.5" width="4" height="10" fill="none" stroke="#e8e8e8" stroke-width="1"/><rect x="674" y="102" width="3" height="3" fill="#e8e8e8"/><rect x="679" y="106" width="4" height="5" fill="#e8e8e8"/><rect x="702" y="106" width="11" height="1" fill="#d8d8d8"/><rect x="705" y="103" width="5" height="3" fill="#e8e8e8"/><rect x="704.5" y="108.5" width="6" height="3" fill="none" stroke="#e8e8e8" stroke-width="1"/><rect x="721" y="101" width="1" height="11" fill="#d8d8d8"/><rect x="720.5" y="105.5" width="3" height="5" fill="none" stroke="#e8e8e8" stroke-width="1"/><rect x="726" y="105" width="4" height="4" fill="#e8e8e8"/></svg>
<div class="a" style="left:623px;top:120px;width:177px;height:1px;background:#2e2c30"></div>
<div class="a" style="left:623px;top:121px;width:177px;height:1px;background:#4a484c"></div>
<div class="a" style="left:636px;top:128px;width:7px;height:7px;border:1px solid #2a282c;background:#3a383b"></div>
<div class="t" style="left:647px;top:126px;font-size:8px">与舞台对齐</div>

<div class="a" style="left:623px;top:160px;width:177px;height:1px;background:#353336"></div>
<div class="a" style="left:623px;top:163px;width:177px;height:12px;background:#29272b"></div>
<div class="a" style="left:624px;top:163px;width:23px;height:12px;background:#3a383b"></div>
<div class="t" style="left:627px;top:164px;font-size:7.5px;color:#f4f4f4">属性</div>
<div class="t" style="left:672px;top:183px;font-size:8px">绘制对象</div>
<svg class="a" style="left:640px;top:190px" width="12" height="12" viewBox="0 0 12 12"><circle cx="5" cy="5" r="3.5" fill="none" stroke="#ddd" stroke-width="1.5"/><rect x="5" y="5" width="6" height="5" fill="#ddd"/><rect x="6" y="6" width="4" height="3" fill="#666"/></svg>

<div class="a" style="left:623px;top:216px;width:177px;height:1px;background:#2e2c30"></div>
<div class="a" style="left:623px;top:217px;width:177px;height:13px;background:linear-gradient(#4a484c,#3e3c40)"></div>
<div class="a" style="left:623px;top:230px;width:177px;height:1px;background:#2e2c30"></div>
<svg class="a" style="left:626px;top:221px" width="7" height="5" viewBox="0 0 7 5"><path d="M0 0 H7 L3.5 4Z" fill="#e0e0e0"/></svg>
<div class="t" style="left:637px;top:218px;font-size:8px">位置和大小</div>
<div class="t" style="left:660px;top:236px;font-size:8px">X:</div>
<div class="t" style="left:673px;top:236px;font-size:8px;letter-spacing:-0.4px;color:#e2a232">234.20</div>
<div class="a" style="left:673px;top:245px;width:21px;height:1px;border-top:1px dotted #8a6a30"></div>
<div class="t" style="left:738px;top:236px;font-size:8px">Y:</div>
<div class="t" style="left:752px;top:236px;font-size:8px;letter-spacing:-0.4px;color:#e2a232">210.65</div>
<div class="a" style="left:752px;top:245px;width:21px;height:1px;border-top:1px dotted #8a6a30"></div>
<div class="a" style="left:623px;top:251px;width:177px;height:1px;background:#3a383c"></div>
<svg class="a" style="left:626px;top:259px" width="10" height="7" viewBox="0 0 10 7"><rect x="0.7" y="0.7" width="8.6" height="5.6" rx="2.8" fill="none" stroke="#ddd" stroke-width="1.3"/><rect x="3" y="3" width="4" height="1" fill="#ddd"/></svg>
<div class="t" style="left:657px;top:257px;font-size:8px">宽:</div>
<div class="t" style="left:673px;top:257px;font-size:8px;letter-spacing:-0.4px;color:#e2a232">0.00</div>
<div class="a" style="left:673px;top:266px;width:15px;height:1px;border-top:1px dotted #8a6a30"></div>
<div class="t" style="left:736px;top:257px;font-size:8px">高:</div>
<div class="t" style="left:752px;top:257px;font-size:8px;letter-spacing:-0.4px;color:#e2a232">174.65</div>
<div class="a" style="left:752px;top:266px;width:21px;height:1px;border-top:1px dotted #8a6a30"></div>

<div class="a" style="left:623px;top:275px;width:177px;height:1px;background:#2e2c30"></div>
<div class="a" style="left:623px;top:276px;width:177px;height:12px;background:linear-gradient(#4a484c,#3e3c40)"></div>
<div class="a" style="left:623px;top:288px;width:177px;height:1px;background:#2e2c30"></div>
<svg class="a" style="left:626px;top:280px" width="7" height="5" viewBox="0 0 7 5"><path d="M0 0 H7 L3.5 4Z" fill="#e0e0e0"/></svg>
<div class="t" style="left:637px;top:277px;font-size:8px">填充和笔触</div>
<svg class="a" style="left:657px;top:294px" width="10" height="10" viewBox="0 0 10 10"><path d="M1 9 L2 6 L7.5 0.5 L9.5 2.5 L4 8Z" fill="#ddd"/></svg>
<div class="a" style="left:679px;top:295px;width:20px;height:10px;background:#22963e;border:1px solid #1a5a2a"></div>
<svg class="a" style="left:739px;top:294px" width="11" height="11" viewBox="0 0 11 11"><path d="M2 5 L5 2 L9 6 L6 9Z" fill="#ddd"/><circle cx="9.5" cy="9" r="1.3" fill="#ddd"/><path d="M3 4 V1" stroke="#ddd"/></svg>
<div class="a" style="left:757px;top:295px;width:19px;height:10px;background:#f4f4f4;border:1px solid #ccc"></div>
<svg class="a" style="left:757px;top:295px" width="19" height="10"><line x1="0" y1="10" x2="19" y2="0" stroke="#666" stroke-width="0.8"/></svg>
<div class="a" style="left:623px;top:309px;width:177px;height:1px;background:#3a383c"></div>
<svg class="a" style="left:678px;top:316px" width="60" height="12" viewBox="678 316 60 12">
<g fill="#e0e0e0">
<rect x="680" y="317" width="1" height="10"/><rect x="688" y="317" width="1" height="10"/><path d="M682 321.5 H685 V320 L687 322 L685 324 V322.5 H682Z"/>
<rect x="700.5" y="316.5" width="10" height="10" fill="none" stroke="#ddd" stroke-width="1"/><rect x="703" y="319" width="2" height="2"/><rect x="706" y="321" width="2" height="2"/><rect x="703" y="323" width="2" height="2"/>
<rect x="727" y="317" width="5" height="6"/><rect x="729" y="319" width="5" height="7" fill="#bbb"/><rect x="731" y="318" width="2" height="2" fill="#555"/>
</g></svg>
<div class="a" style="left:623px;top:333px;width:177px;height:1px;background:#2e2c30"></div>
<div class="t" style="left:648px;top:341px;font-size:8px">笔触:</div>
<div class="a" style="left:680px;top:343.5px;width:76px;height:3px;border-radius:2px;background:#1e1c20"></div>
<div class="a" style="left:680px;top:341px;width:5px;height:7px;background:#7a787c;border-radius:1px"></div>
<div class="a" style="left:767px;top:339px;width:28px;height:12px;background:#a6a4a8;border:1px solid #7a787c"></div>
<div class="t" style="left:769px;top:340px;font-size:8px;color:#222">8.00</div>
<div class="t" style="left:648px;top:359px;font-size:8px">样式:</div>
<div class="a" style="left:676px;top:357px;width:99px;height:13px;background:#3a383b;border:1px solid #2c2a2e"></div>
<div class="a" style="left:684px;top:362.5px;width:80px;height:2px;background:#b4b4b4"></div>
<svg class="a" style="left:767px;top:361px" width="7" height="5"><path d="M0 0 H7 L3.5 4Z" fill="#e0e0e0"/></svg>
<svg class="a" style="left:781px;top:358px" width="10" height="10" viewBox="0 0 10 10"><path d="M1 9 L2 6 L7.5 0.5 L9.5 2.5 L4 8Z" fill="#ddd"/></svg>
<div class="a" style="left:794px;top:357px;width:6px;height:11px;background:#5a585c"></div>
<div class="a" style="left:676px;top:372px;width:66px;height:13px;background:#3e3c40;border:1px solid #2e2c30"></div>
<div class="t" style="left:692px;top:373px;font-size:8px;color:#6e6c70">管理画笔</div>
<div class="t" style="left:648px;top:388px;font-size:8px">宽度:</div>
<div class="a" style="left:681px;top:388px;width:94px;height:12px;background:#343236;border:1px solid #2a282c"></div>
<div class="a" style="left:683px;top:390px;width:72px;height:8px;background:#f8fff8;border:1px solid #6fbf7f"></div>
<svg class="a" style="left:767px;top:392px" width="7" height="5"><path d="M0 0 H7 L3.5 4Z" fill="#e0e0e0"/></svg>
<div class="t" style="left:781px;top:387px;font-size:10px;color:#6a686c">+ -</div>
<div class="a" style="left:623px;top:402px;width:177px;height:1px;background:#2e2c30"></div>
<div class="t" style="left:648px;top:408px;font-size:8px">缩放:</div>
<div class="a" style="left:676px;top:406px;width:86px;height:13px;background:#343236;border:1px solid #2a282c"></div>
<div class="t" style="left:681px;top:408px;font-size:8px">一般</div>
<div class="a" style="left:753px;top:407px;width:8px;height:11px;background:#4a484c"></div>
<svg class="a" style="left:754px;top:411px" width="6" height="4"><path d="M0 0 H6 L3 4Z" fill="#e0e0e0"/></svg>
<div class="a" style="left:765px;top:408px;width:7px;height:8px;border:1px solid #2a282c;background:#3a383b"></div>
<div class="t" style="left:774px;top:408px;font-size:8px">提示</div>
<div class="a" style="left:623px;top:421px;width:177px;height:1px;background:#2e2c30"></div>
<div class="t" style="left:648px;top:428px;font-size:8px">端点:</div>
<svg class="a" style="left:676px;top:428px" width="26" height="10" viewBox="0 0 26 10"><path d="M8 1 H3 Q0 1 0 5 Q0 9 3 9 H8 V6.5 H4 V3.5 H8Z" fill="#e8e8e8"/><path d="M15 3 H21 L18 7Z" fill="#e0e0e0"/></svg>
<div class="t" style="left:648px;top:442px;font-size:8px">接合:</div>
<div class="a" style="left:676px;top:444px;width:8px;height:4px;background:#e8e8e8"></div>
<div class="t" style="left:760px;top:442px;font-size:8px">尖角:</div>
<div class="a" style="left:623px;top:446px;width:177px;height:2px;background:#2f4a36"></div>
</body></html>
